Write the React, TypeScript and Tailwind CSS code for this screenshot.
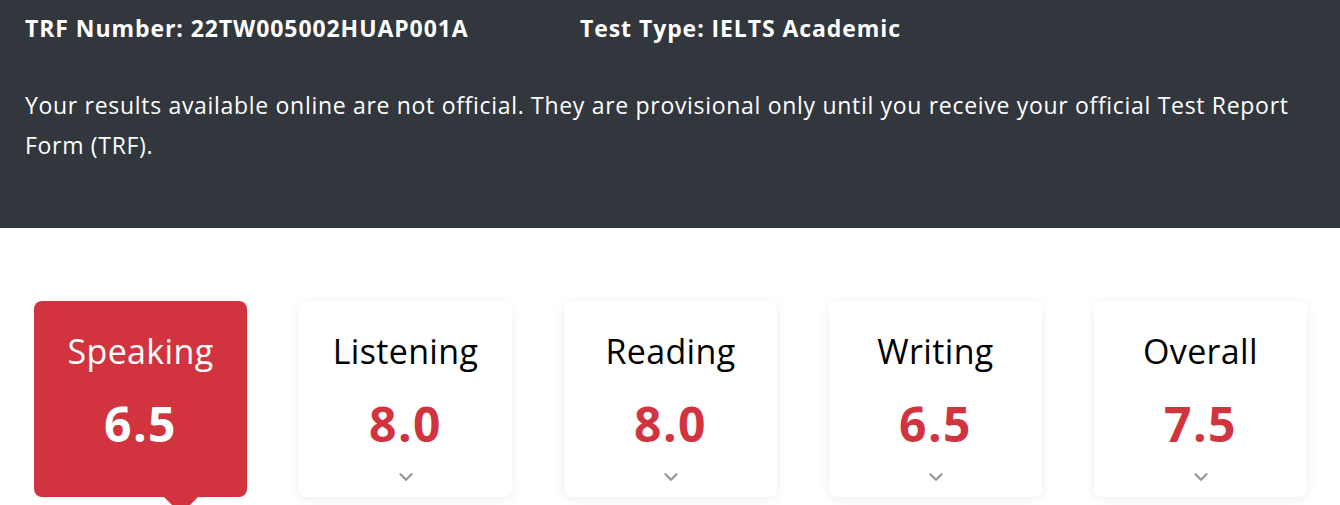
import { ChevronDown } from "lucide-react";

const scores = [
  { label: "Speaking", value: "6.5", active: true },
  { label: "Listening", value: "8.0" },
  { label: "Reading", value: "8.0" },
  { label: "Writing", value: "6.5" },
  { label: "Overall", value: "7.5" },
];

function ScoreCard({ label, value, active }: { label: string; value: string; active?: boolean }) {
  return (
    <div
      className={[
        "relative flex h-[196px] w-[213px] flex-col items-center rounded-lg",
        active
          ? "bg-[#d1343f] text-white"
          : "bg-white text-black shadow-[0_2px_12px_rgba(0,0,0,0.07)]",
      ].join(" ")}
    >
      <div className="mt-[30px] text-[34px] leading-[40px] tracking-[0.01em]">{label}</div>
      <div
        className={[
          "mt-[28px] text-[48px] font-bold leading-[50px] tracking-[0.03em]",
          active ? "text-white" : "text-[#d1343f]",
        ].join(" ")}
      >
        {value}
      </div>
      {!active && <ChevronDown className="mt-[17px] h-[22px] w-[22px] text-[#9b9691]" strokeWidth={2.5} />}
      {active && (
        <div className="absolute left-[129px] top-[195px] h-0 w-0 border-x-[18px] border-t-[18px] border-x-transparent border-t-[#d1343f]" />
      )}
    </div>
  );
}

export default function App() {
  return (
    <div className="h-[505px] w-[1340px] overflow-hidden bg-white font-['Open_Sans',sans-serif]">
      <div className="h-[228px] bg-[#32373e] px-[25px] pt-[12px] text-white">
        <div className="flex text-[23px] font-bold leading-[32px] tracking-[0.04em]">
          <span className="w-[555px]">TRF Number: 22TW005002HUAP001A</span>
          <span>Test Type: IELTS Academic</span>
        </div>
        <p className="mt-[41px] text-[23px] leading-[40px] tracking-[0.03em]">
          Your results available online are not official. They are provisional only until you receive your official Test Report
          Form (TRF).
        </p>
      </div>
      <div className="flex gap-[52px] pl-[34px] pt-[73px]">
        {scores.map((s) => (
          <ScoreCard key={s.label} {...s} />
        ))}
      </div>
    </div>
  );
}
